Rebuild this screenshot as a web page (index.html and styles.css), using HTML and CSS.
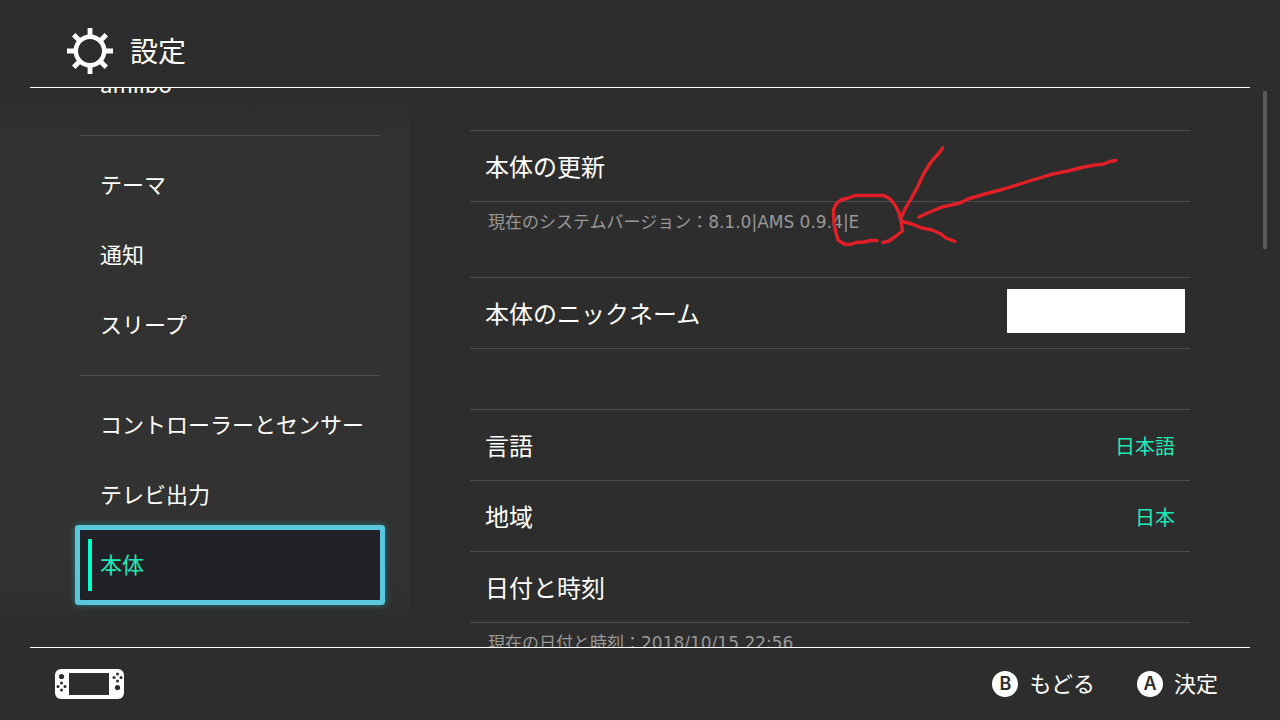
FILE: index.html
```html
<!DOCTYPE html>
<html lang="ja">
<head>
    <meta charset="UTF-8">
    <meta name="viewport" content="width=device-width, initial-scale=1.0">
    <title>設定</title>
    <link rel="stylesheet" href="styles.css">
</head>
<body>
    <header class="header">
        <svg class="header__icon" viewBox="0 0 46 46" width="46" height="46" fill="none" stroke="#fff">
            <circle cx="23" cy="23" r="14.2" stroke-width="4.5"/>
            <path stroke-width="4.8" d="M23 0v8M23 38v8M0 23h8M38 23h8M6.7 6.7l6 6M33.3 33.3l6 6M6.7 39.3l6-6M33.3 12.7l6-6"/>
        </svg>
        <h1 class="header__title">設定</h1>
    </header>
    <main class="main">
        <nav class="sidebar">
            <div class="menu">
                <button class="menu__item" type="button">amiibo</button>
                <hr class="menu__line">
                <button class="menu__item" type="button">テーマ</button>
                <button class="menu__item" type="button">通知</button>
                <button class="menu__item" type="button">スリープ</button>
                <hr class="menu__line">
                <button class="menu__item" type="button">コントローラーとセンサー</button>
                <button class="menu__item" type="button">テレビ出力</button>
                <button class="menu__item menu__item--active" type="button"><span class="menu__text">本体</span></button>
            </div>
        </nav>
        <section class="content">
            <div class="group">
                <button class="row" type="button">本体の更新</button>
            </div>
            <div class="note">
                現在のシステムバージョン：8.1.0|AMS 0.9.4|E
                <svg class="note__mark" viewBox="820 140 310 110" width="310" height="110" fill="none" stroke="#e01f26" stroke-width="3.4" stroke-linecap="round" stroke-linejoin="round">
                    <path d="M877 240.500L870 240.500L864 242L856 242.500L850 244.500L844 244L838 240L836 233L834 223L833.500 210L836 204L841 200L848 198L855 195.500H884L890 199L895 205L899 213L901 221L902.500 231L896 236L889 241L883 242.500"/>
                    <path d="M942.500 148L939 153L931 162L924 173L918 186L911 199L905 209L901 218"/>
                    <path d="M902 221.500L912 224L922 228L932 230L941 234L946 238L955 241.500"/>
                    <path d="M919 217L930 212L942 207L960 203L968 199L985 194L1004 189L1020 184L1036 179L1053 174L1068 171L1084 167L1095 165L1104 164L1110 161.500L1115.500 160.500"/>
                </svg>
            </div>
            <div class="group">
                <button class="row row--name" type="button">本体のニックネーム<span class="row__name"></span></button>
            </div>
            <div class="group">
                <button class="row" type="button">言語<span class="row__value">日本語</span></button>
                <button class="row" type="button">地域<span class="row__value">日本</span></button>
                <button class="row" type="button">日付と時刻</button>
            </div>
            <div class="note">現在の日付と時刻：2018/10/15 22:56</div>
        </section>
        <div class="scrollbar"></div>
    </main>
    <footer class="footer">
        <svg class="footer__console" viewBox="0 0 69 30" width="69" height="30">
            <rect width="69" height="30" rx="6" fill="#fff"/>
            <g fill="#2d2d2d">
                <rect x="14" y="4" width="40" height="22"/>
                <circle cx="6.500" cy="7.500" r="2.600"/>
                <circle cx="6.500" cy="14" r="1.500"/>
                <circle cx="6.500" cy="21" r="1.500"/>
                <circle cx="3" cy="17.500" r="1.500"/>
                <circle cx="10" cy="17.500" r="1.500"/>
                <circle cx="62.500" cy="18.500" r="2.600"/>
                <circle cx="62.500" cy="5" r="1.500"/>
                <circle cx="62.500" cy="12" r="1.500"/>
                <circle cx="59" cy="8.500" r="1.500"/>
                <circle cx="66" cy="8.500" r="1.500"/>
            </g>
        </svg>
        <div class="hints">
            <button class="hint" type="button"><span class="hint__key">B</span><span class="hint__text">もどる</span></button>
            <button class="hint" type="button"><span class="hint__key">A</span><span class="hint__text">決定</span></button>
        </div>
    </footer>
</body>
</html>
```
FILE: styles.css
```css
* {
    box-sizing: border-box;
}

body {
    margin: 0;
    height: 100vh;
    display: flex;
    flex-direction: column;
    background-color: #2d2d2d;
    color: #fff;
    font-family: "Noto Sans CJK JP", sans-serif;
}

button {
    border: none;
    background: none;
    padding: 0;
    color: inherit;
    font: inherit;
    text-align: left;
    cursor: pointer;
}

.header {
    display: flex;
    align-items: center;
    gap: 17px;
    flex-shrink: 0;
    height: 88px;
    margin: 0 30px;
    padding: 15px 37px 0;
    border-bottom: 1px solid #fff;
}

.header__title {
    margin: 0;
    padding-bottom: 2px;
    font-size: 28px;
    font-weight: 400;
    line-height: 40px;
}

.main {
    position: relative;
    display: flex;
    flex: 1;
    min-height: 0;
    overflow: hidden;
}

.sidebar {
    width: 410px;
    flex-shrink: 0;
    padding: 0 30px 0 80px;
    background: linear-gradient(#2d2d2d, #323232 60px, #323232 calc(100% - 90px), #2d2d2d);
}

/* the list is scrolled, its first item is half hidden */
.menu {
    display: flex;
    flex-direction: column;
    margin-top: -38px;
}

.menu__item {
    height: 70px;
    padding: 0 20px 4px;
    font-size: 22px;
    line-height: 32px;
    white-space: nowrap;
}

.menu__item--active {
    display: flex;
    align-items: center;
    gap: 8px;
    padding: 0 8px;
    background-color: #212227;
    color: #1feab8;
    border-radius: 1px;
    box-shadow: 0 0 0 5px #5ac8dc, 0 0 6px 5px rgba(50, 190, 200, 0.5);
}

.menu__item--active::before {
    content: "";
    width: 4px;
    height: 52px;
    background-color: #00ffcb;
}

.menu__text {
    padding-bottom: 4px;
}

.menu__line {
    width: 100%;
    height: 1px;
    margin: 15px 0 14px;
    border: none;
    background-color: #505050;
}

.content {
    flex: 1;
    padding: 42px 90px 0 60px;
}

.group {
    border-top: 1px solid #4d4d4d;
}

.group + .group {
    margin-top: 60px;
}

.row {
    display: flex;
    align-items: center;
    justify-content: space-between;
    width: 100%;
    height: 71px;
    padding: 0 15px;
    border-bottom: 1px solid #4d4d4d;
    font-size: 24px;
    line-height: 36px;
}

.row--name {
    padding-right: 5px;
}

.row__name {
    width: 178px;
    height: 44px;
    margin-bottom: 4px;
    background-color: #fff;
}

.row__value {
    padding-top: 2px;
    color: #1feab8;
    font-size: 20px;
}

.note {
    position: relative;
    height: 75px;
    padding: 8px 18px;
    color: #989898;
    font-family: "DejaVu Sans", "Noto Sans CJK JP", sans-serif;
    font-size: 17px;
    line-height: 24px;
}

.note__mark {
    position: absolute;
    top: -62px;
    left: 350px;
}

.scrollbar {
    position: absolute;
    top: 3px;
    right: 13px;
    width: 4px;
    height: 158px;
    border-radius: 1px;
    background-color: #5a5a5a;
}

.footer {
    display: flex;
    align-items: center;
    justify-content: space-between;
    flex-shrink: 0;
    height: 73px;
    margin: 0 30px;
    padding: 0 32px 0 25px;
    border-top: 1px solid #fff;
}

.hints {
    display: flex;
    gap: 42px;
}

.hint {
    display: flex;
    align-items: center;
    gap: 11px;
    font-size: 22px;
    line-height: 32px;
}

.hint__text {
    padding-bottom: 4px;
}

.hint__key {
    width: 26px;
    height: 26px;
    border-radius: 50%;
    background-color: #fff;
    color: #2d2d2d;
    font-family: Inter, sans-serif;
    font-size: 18px;
    font-weight: 600;
    line-height: 26px;
    text-align: center;
}
```
